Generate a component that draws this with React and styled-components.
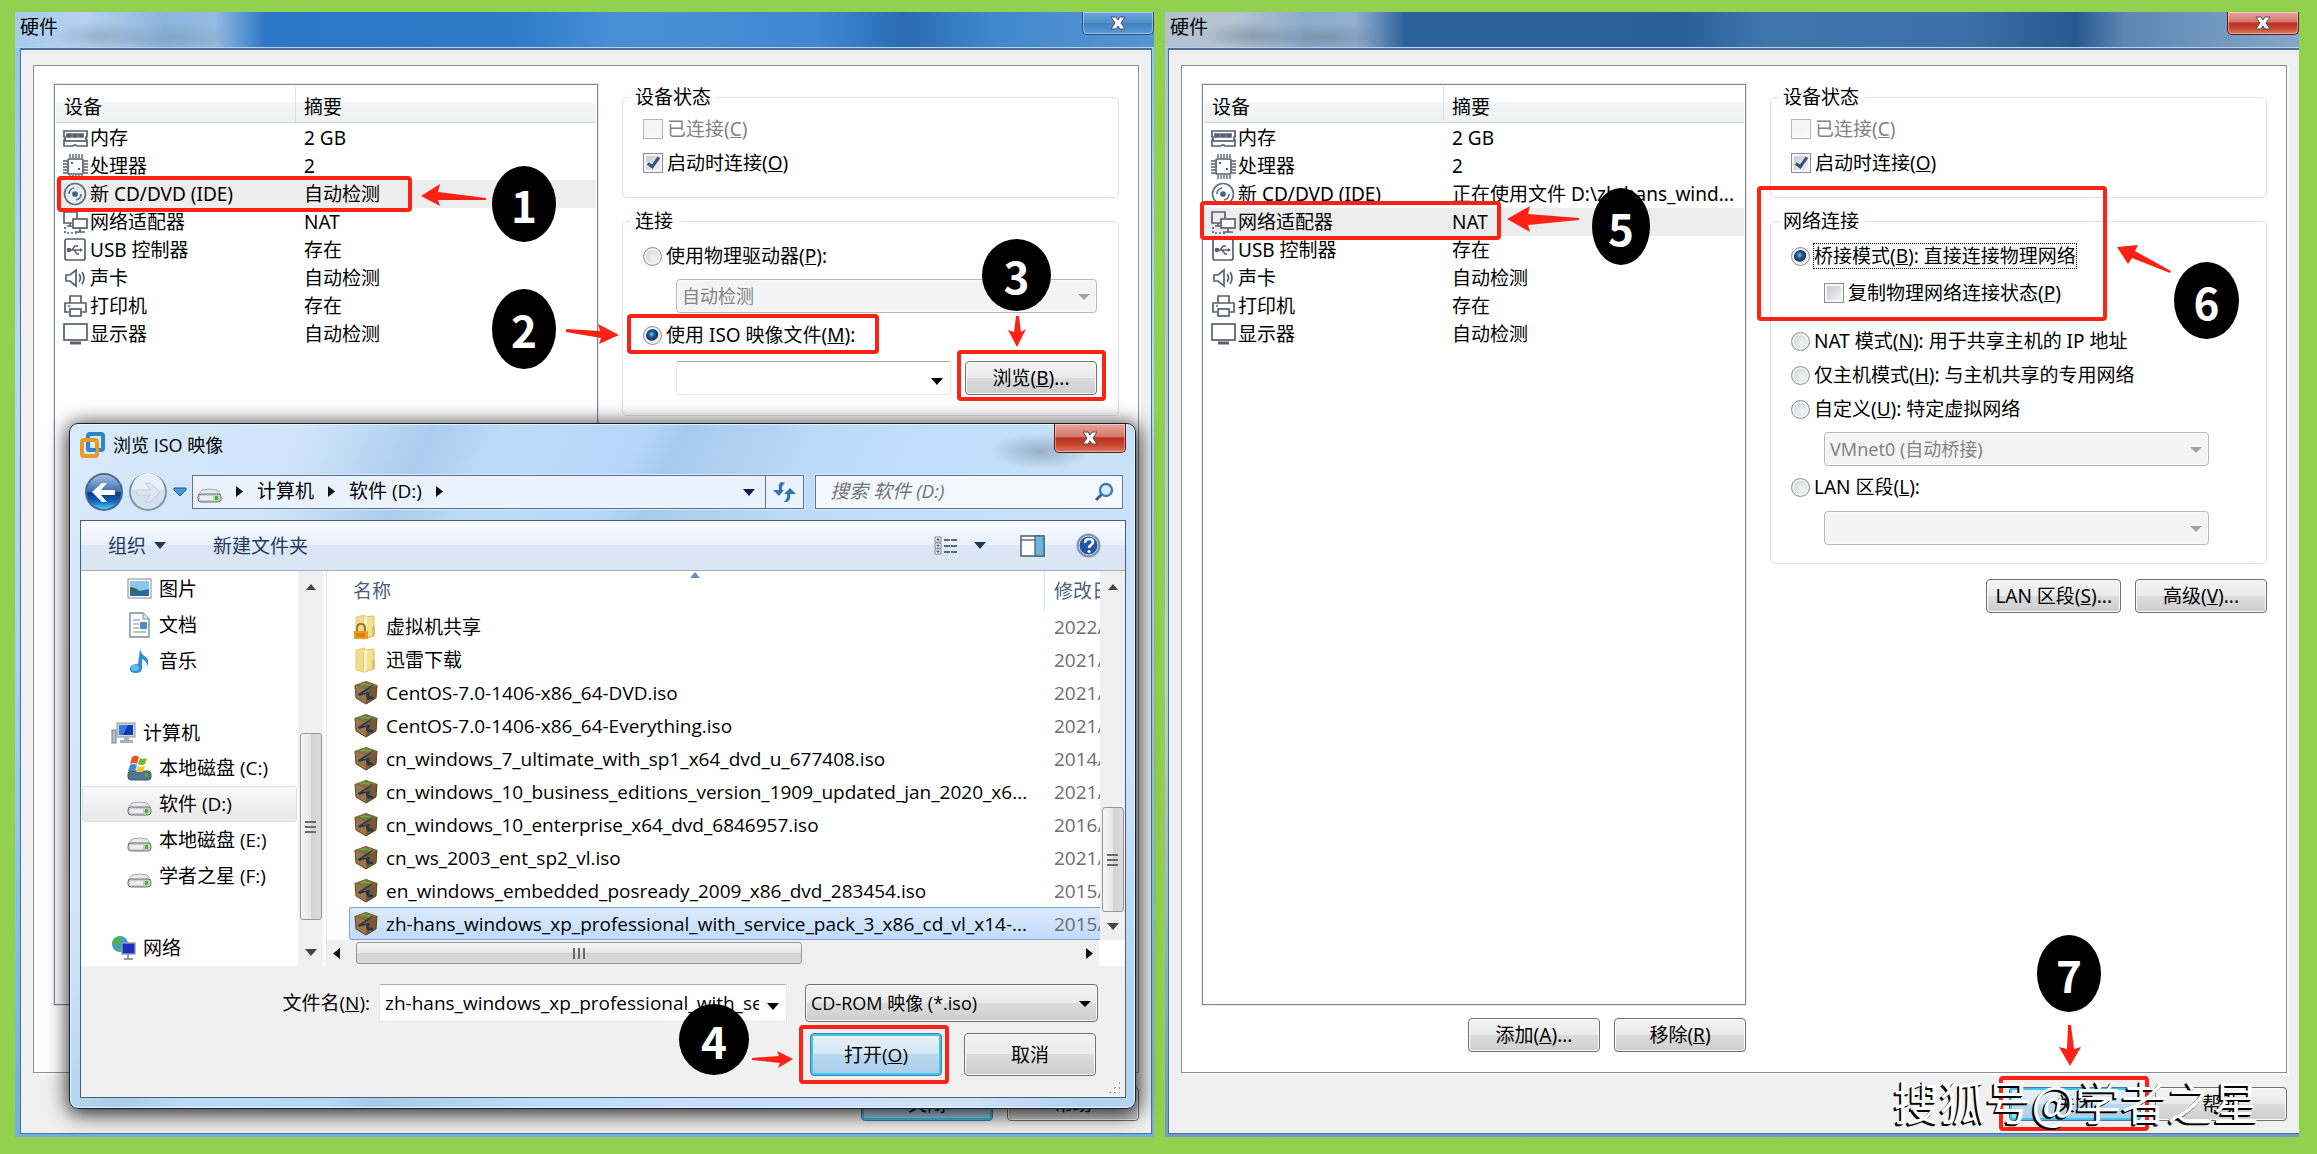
import styled, { createGlobalStyle, css } from "styled-components";

const GlobalStyle = createGlobalStyle`
    *, *::before, *::after {
        box-sizing: border-box;
    }
    body {
        margin: 0;
        background: #92d050;
        color: #000;
        font-family: "Noto Sans", "Noto Sans CJK SC", sans-serif;
        font-size: 19px;
        line-height: 28px;
    }
    button, input, select {
        font: inherit;
        color: inherit;
        margin: 0;
    }
`;

const Page = styled.main`
    display: grid;
    grid-template-columns: 1139fr 1134fr;
    gap: 11px;
    min-height: 100vh;
    padding: 12px 18px 17px 15px;
`;

/* ---------- hardware window ---------- */

const Frame = styled.section`
    position: relative;
    display: flex;
    flex-direction: column;
    min-width: 0;
    padding: ${(p) => (p.$active ? "0 0 3px 3px" : "0 2px 3px 5px")};
    background: ${(p) =>
      p.$active
        ? "linear-gradient(180deg, #a9c3df, #b9cde2 60%, #6f9cc9)"
        : "linear-gradient(180deg, #8fc0ee, #b7daf8 30%, #a5d0f4 60%, #6fb0e2)"};
`;

const blueGlass = `
    radial-gradient(ellipse 50px 14px at 86px 24px, #8296ab88, transparent),
    radial-gradient(ellipse 66px 14px at 160px 25px, #8296ab88, transparent),
    linear-gradient(90deg, #a9cbec 0, #b5d2ee 70px, #8bb5df 150px, #94bce3 200px, #2c78c6 250px, #2e7bc8 500px, #4690d6 600px, #3f89d0 800px, #2a6bb4 890px, #4288cc 980px, #5795d2 100%)
`;

const greyGlass = `
    radial-gradient(ellipse 50px 14px at 86px 24px, #6c7f9288, transparent),
    radial-gradient(ellipse 66px 14px at 160px 25px, #6c7f9288, transparent),
    linear-gradient(90deg, #b3c0ce 0, #b6c4d2 70px, #8cabcb 140px, #93b0d0 190px, #2c629b 240px, #2a6099 520px, #3f76ac 600px, #3b71a8 800px, #28588f 910px, #5c87b4 960px, #86a7cb 100%)
`;

const TitleBar = styled.header`
    display: flex;
    justify-content: space-between;
    height: 36px;
    margin: ${(p) => (p.$active ? "0 0 0 -3px" : "0 -2px 0 -5px")};
    padding-left: 5px;
    background: ${(p) => (p.$active ? greyGlass : blueGlass)};
    border-bottom: 1px solid #b6d3ee;
`;

const WindowTitle = styled.h1`
    margin: 0;
    font-size: 19px;
    font-weight: 400;
    line-height: 30px;
`;

const CloseButton = styled.button`
    display: flex;
    align-items: center;
    justify-content: center;
    width: 72px;
    height: ${(p) => p.$height}px;
    padding: 0;
    border: 1px solid ${(p) => (p.$red ? "#5d1a17" : "#24507f")};
    border-top: none;
    border-radius: 0 0 5px 5px;
    box-shadow: inset 0 0 0 1px #ffffff66;
    background: ${(p) =>
      p.$red
        ? "linear-gradient(180deg, #e6a79d 0, #d4766a 45%, #b9311f 50%, #c9462f 75%, #dd7a60)"
        : "linear-gradient(180deg, #6da3d8, #4f8dcb 50%, #3f80c1 50%, #5d99d4)"};
`;

const Client = styled.div`
    flex: 1;
    display: flex;
    flex-direction: column;
    padding: 15px 12px 12px;
    background: #f0f0f0;
    border: 1px solid #4d7396;
    border-top-width: 2px;
    ${(p) => p.$active && "border-right: none;"}
`;

const Panel = styled.div`
    flex: 1;
    display: grid;
    grid-template-columns: 544fr 497fr;
    gap: 24px;
    padding: 18px 19px 20px 20px;
    background: #fff;
    border: 1px solid #8a8f94;
    box-shadow: 1px 1px 0 1px #fbfbfb;
`;

const Column = styled.div`
    display: flex;
    flex-direction: column;
    min-width: 0;
`;

const ListBox = styled.div`
    flex: 1;
    padding: 1px;
    border: 1px solid #828790;
    box-shadow: 0 0 0 1px #e4e6e8;
`;

const DeviceTable = styled.table`
    width: 100%;
    table-layout: fixed;
    border-spacing: 0;

    th {
        height: 37px;
        padding: 6px 8px 0;
        font-weight: 400;
        text-align: left;
        line-height: 28px;
        border-bottom: 1px solid #d0d2d5;
        background: linear-gradient(180deg, #fff 45%, #f4f5f6 45%, #f0f1f3);
    }
    th:first-child {
        width: 240px;
        border-right: 1px solid #dfe1e4;
    }
    tbody::before {
        content: "";
        display: block;
        height: 1px;
    }
`;

const DeviceRow = styled.tr`
    height: 28px;

    td {
        padding: 0 0 0 8px;
        white-space: nowrap;
        background: ${(p) => (p.$selected ? "#ededed" : "transparent")};
    }
    td:first-child {
        padding-left: 7px;
    }
`;

const DeviceName = styled.span`
    display: flex;
    align-items: center;
    gap: 2px;
    height: 28px;
`;

const ButtonRow = styled.div`
    display: flex;
    justify-content: flex-end;
    gap: 14px;
    min-height: 34px;
    margin-top: ${(p) => p.$top}px;
`;

const raised = css`
    border: 1px solid #707070;
    border-radius: 4px;
    background: linear-gradient(180deg, #f3f3f3, #ebebeb 49%, #dcdcdc 50%, #cecece);
    box-shadow: inset 0 0 0 1px #fafafa;
`;

const Button = styled.button`
    ${raised}
    min-width: 132px;
    height: ${(p) => p.$height || 34}px;
    padding: 0 8px;
    white-space: nowrap;
    ${(p) =>
      p.$primary &&
      css`
        border-color: #3c7fb1;
        background: linear-gradient(180deg, #e8f2f9, #d6e8f5 49%, #b9d9ef 50%, #a9cfe9);
        box-shadow: inset 0 0 0 2px #3fc6ee;
      `}
`;

const Group = styled.fieldset`
    min-width: 0;
    margin: 0 0 10px;
    padding: 2px 21px 0 20px;
    border: 1px solid #d9e2e8;
    border-radius: 5px;
    min-height: ${(p) => p.$height}px;

    legend {
        margin-left: -13px;
        padding: 0 5px;
        line-height: 26px;
    }
`;

const Option = styled.label`
    display: flex;
    align-items: center;
    gap: 4px;
    width: max-content;
    height: ${(p) => p.$height || 34}px;
    margin-left: ${(p) => p.$indent || 0}px;
    color: ${(p) => (p.$disabled ? "#838383" : "#000")};
`;

const FocusText = styled.span`
    outline: ${(p) => (p.$focused ? "1px dotted #000" : "none")};
    line-height: 24px;
    white-space: nowrap;
`;

const Check = styled.input.attrs({ type: "checkbox" })`
    appearance: none;
    position: relative;
    width: 20px;
    height: 20px;
    border: 1px solid ${(p) => (p.disabled ? "#b5b5b5" : "#8e8f8f")};
    box-shadow: inset 0 0 0 2px #f6f6f6;
    background: linear-gradient(135deg, ${(p) => (p.disabled ? "#f2f2f2, #fafafa" : "#c3c9d0, #f4f5f6")});

    &:checked::after {
        content: "";
        position: absolute;
        left: 6px;
        top: 1px;
        width: 7px;
        height: 13px;
        border: solid #31517f;
        border-width: 0 3px 3px 0;
        transform: rotate(35deg);
    }
`;

const Radio = styled.input.attrs({ type: "radio" })`
    appearance: none;
    width: 19px;
    height: 19px;
    border: 1px solid #8b8d8f;
    border-radius: 50%;
    box-shadow: inset 0 0 0 2px #f2f2f2;
    background: radial-gradient(circle at 60% 60%, #f4f4f4, #c5c8cb);

    &:checked {
        background: radial-gradient(circle at 45% 42%, #7fc0ea 0, #1f5c94 3px, #12355f 6px, #e3e6e9 7px);
    }
`;

const SelectWrap = styled.span`
    position: relative;
    display: block;
    min-width: 0;

    &::after {
        content: "";
        position: absolute;
        right: 7px;
        top: 50%;
        width: 12px;
        height: 6px;
        margin-top: -2px;
        clip-path: polygon(0 0, 100% 0, 50% 100%);
        background: ${(p) => (p.$disabled ? "#a3a3a3" : "#000")};
        pointer-events: none;
    }
`;

const Select = styled.select`
    appearance: none;
    display: block;
    width: 100%;
    height: ${(p) => p.$height || 34}px;
    padding: 0 26px 0 5px;
    ${raised}
    font-size: 18px;

    &:disabled {
        color: #838383;
        opacity: 1;
        border-color: #b5b8ba;
        background: #f4f4f4;
    }
`;

const Indented = styled.div`
    margin: ${(p) => p.$top || 0}px ${(p) => p.$right || 0}px 0 33px;
`;

const BrowseRow = styled.div`
    display: grid;
    grid-template-columns: 1fr 132px;
    gap: 14px;
    align-items: center;
    margin: 4px 0 0 33px;
`;

const Combo = styled.span`
    display: flex;
    min-width: 0;
    height: ${(p) => p.$height}px;
    border: 1px solid #e2e8ec;
    border-top-color: #abadb3;
    border-radius: 2px;
    background: #fff;

    input {
        flex: 1;
        min-width: 0;
        padding: 0 0 0 5px;
        border: none;
        background: none;
        outline: none;
    }
    button {
        width: 27px;
        padding: 0;
        border: none;
        background: none;
    }
`;

/* ---------- browse dialog ---------- */

const Dialog = styled.section`
    position: absolute;
    left: 54px;
    right: 18px;
    top: 411px;
    bottom: 28px;
    display: flex;
    flex-direction: column;
    padding: 0 9px 10px 10px;
    border: 1px solid #15202c;
    border-radius: 9px;
    box-shadow: inset 0 0 0 1px #e9f4ff, 1px 3px 20px 2px #000000d9;
    background:
        radial-gradient(ellipse 50px 18px at 970px 27px, #7f99b3aa, transparent),
        linear-gradient(115deg, #d9eafb 0, #cfe4fa 220px, #a9cdec 330px, #bcdcfa 400px, #b5d8f8 520px, #a6cbea 560px, #bcdcfa 700px, #c6e0fa 900px, #cde3f9 1100px, #b3d3f2 1200px);
    font-family: "Open Sans", "Noto Sans CJK SC", sans-serif;
`;

const DialogTitle = styled.header`
    display: flex;
    align-items: center;
    gap: 8px;
    height: 42px;

    h2 {
        margin: 0;
        font-size: 18px;
        font-weight: 400;
    }
    > button {
        align-self: flex-start;
        margin-left: auto;
    }
`;

const AddressRow = styled.div`
    display: grid;
    grid-template-columns: 40px 40px 16px 609fr 313fr;
    align-items: center;
    column-gap: 4px;
    height: 40px;
    margin: 6px 3px 8px 4px;
`;

const BareButton = styled.button`
    display: flex;
    align-items: center;
    justify-content: center;
    gap: ${(p) => p.$gap || 0}px;
    padding: 0;
    border: none;
    background: none;
    white-space: nowrap;
`;

const Address = styled.nav`
    display: flex;
    align-items: center;
    gap: 14px;
    min-width: 0;
    height: 34px;
    padding: 0 0 2px 4px;
    border: 1px solid #5d7489;
    background: #eaf3fd;
    box-shadow: 0 0 0 1px #d5e8fa;

    > button {
        height: 32px;
        margin-bottom: -2px;
    }
    > button:nth-last-child(2) {
        width: 24px;
        margin-left: auto;
    }
    > button:last-child {
        width: 38px;
        margin-left: -10px;
        border-left: 1px solid #5d7489;
    }
`;

const Search = styled.label`
    display: flex;
    align-items: center;
    min-width: 0;
    height: 34px;
    margin-left: 7px;
    padding: 0 8px 0 14px;
    border: 1px solid #5d7489;
    background: #f3f8fe;
    box-shadow: 0 0 0 1px #d5e8fa;

    input {
        flex: 1;
        min-width: 0;
        padding: 0 0 2px;
        border: none;
        outline: none;
        background: none;
        font-style: italic;
    }
    input::placeholder {
        color: #757575;
    }
`;

const DialogBody = styled.div`
    flex: 1;
    display: flex;
    flex-direction: column;
    min-height: 0;
    border: 1px solid #4a5f75;
    background: #f0f0f0;
`;

const Toolbar = styled.div`
    display: flex;
    align-items: center;
    height: 50px;
    padding: 0 24px 0 27px;
    color: #1e395b;
    border-bottom: 1px solid #a0afc3;
    background: linear-gradient(180deg, #fafcff, #e8f0fb 48%, #dce6f4 49%, #dbe6f5);

    > button:nth-child(2) {
        margin-left: 47px;
    }
    > button:nth-child(3) {
        margin-left: auto;
    }
    > button:nth-child(4) {
        margin: 0 31px 0 34px;
    }
`;

const Panes = styled.div`
    flex: 1;
    display: flex;
    min-height: 0;
    background: #fff;
`;

const NavTree = styled.ul`
    flex: 0 0 217px;
    display: grid;
    grid-template-rows: repeat(11, 1fr);
    margin: 0;
    padding: 0 1px;
    list-style: none;
`;

const NavItem = styled.li`
    display: flex;
    align-items: center;
    gap: 7px;
    padding-left: ${(p) => (p.$root ? 28 : 44)}px;
    border: 1px solid transparent;
    border-radius: 3px;
    white-space: nowrap;
    ${(p) =>
      p.$selected &&
      css`
        border-color: #dcdcdc;
        background: linear-gradient(180deg, #fafafa, #e8e8e8);
      `}
    svg {
        flex: none;
    }
`;

const ScrollTrack = styled.div`
    display: flex;
    flex-direction: ${(p) => (p.$horizontal ? "row" : "column")};
    align-items: center;
    justify-content: space-between;
    flex: 0 0 25px;
    padding: ${(p) => (p.$horizontal ? "0 6px" : "13px 0 10px")};
    background: #f0f0f0;
`;

const thumbGradient = (deg) => `linear-gradient(${deg}deg, #f6f6f6, #e6e6e6 49%, #d2d2d2 50%, #dcdcdc)`;

const Thumb = styled.span`
    display: flex;
    flex-direction: ${(p) => (p.$horizontal ? "row" : "column")};
    align-items: center;
    justify-content: center;
    gap: 3px;
    border: 1px solid #979797;
    border-radius: 3px;
    ${(p) =>
      p.$horizontal
        ? css`
            width: 446px;
            height: 22px;
            margin: 0 auto 0 16px;
            background: ${thumbGradient(180)};
          `
        : css`
            width: 22px;
            height: ${p.$length}px;
            margin: auto 0 ${p.$below}px;
            background: ${thumbGradient(90)};
          `}

    i {
        width: ${(p) => (p.$horizontal ? 2 : 11)}px;
        height: ${(p) => (p.$horizontal ? 11 : 2)}px;
        background: #6b6b6b;
    }
`;

const FilePane = styled.div`
    flex: 1;
    display: flex;
    flex-direction: column;
    min-width: 0;
    margin-left: 3px;
    border-left: 1px solid #d9e8f5;
`;

const FileArea = styled.div`
    flex: 1;
    display: flex;
    min-height: 0;
`;

const FileTable = styled.table`
    flex: 1;
    display: flex;
    flex-direction: column;
    min-width: 0;
    padding-left: 22px;

    tr {
        display: grid;
        grid-template-columns: 1fr 56px;
    }
    th, td {
        display: flex;
        align-items: center;
        min-width: 0;
        padding: 0;
        overflow: hidden;
        white-space: nowrap;
    }
    th {
        position: relative;
        height: 40px;
        padding-left: 4px;
        color: #4c607a;
        font-weight: 400;
    }
    th svg {
        position: absolute;
        top: 1px;
        left: 49%;
    }
    th:last-child {
        padding-left: 9px;
        border-left: 1px solid #dbe8f3;
    }
    tbody {
        flex: 1;
        display: grid;
        grid-auto-rows: 1fr;
    }
    td:first-child {
        gap: 8px;
        padding-left: 4px;
    }
    td:last-child {
        padding-left: 10px;
        color: #6d6d6d;
    }
    td svg {
        flex: none;
    }
`;

const FileRow = styled.tr`
    border: 1px solid transparent;
    border-right: none;
    border-radius: 3px 0 0 3px;
    ${(p) =>
      p.$selected &&
      css`
        border-color: #7da2ce;
        background: linear-gradient(180deg, #dcebfc, #c1dbfc);
      `}
`;

const Corner = styled.span`
    flex: none;
    width: 26px;
    background: #fff;
`;

const HScrollRow = styled.div`
    display: flex;
    height: 26px;

    > div {
        flex: 1;
    }
`;

const DialogFooter = styled.form`
    height: 131px;
    padding: 18px 27px 0 0;
`;

const FileNameRow = styled.div`
    display: grid;
    grid-template-columns: 298px 1fr 18px 293px;
    align-items: center;

    label {
        padding-right: 9px;
        text-align: right;
    }
    > :last-child {
        grid-column: 4;
    }
`;

const DialogButtons = styled.div`
    display: flex;
    justify-content: flex-end;
    gap: 22px;
    margin: 11px 2px 0 0;
`;

/* ---------- step marks ---------- */

const Marks = styled.div`
    position: absolute;
    inset: 0;
    pointer-events: none;
`;

const RedBox = styled.span`
    position: absolute;
    left: ${(p) => p.$x}px;
    top: ${(p) => p.$y}px;
    width: ${(p) => p.$w}px;
    height: ${(p) => p.$h}px;
    border: 4px solid #ff2113;
    border-radius: 4px;
`;

const Step = styled.span`
    position: absolute;
    left: ${(p) => p.$x}px;
    top: ${(p) => p.$y}px;
    display: flex;
    align-items: center;
    justify-content: center;
    width: ${(p) => p.$w}px;
    height: ${(p) => p.$h}px;
    border-radius: 50%;
    background: #000;
    color: #fff;
    font-family: "Noto Sans CJK SC", sans-serif;
    font-size: 44px;
    font-weight: 700;
`;

const Arrow = styled.svg`
    position: absolute;
    left: ${(p) => p.$x}px;
    top: ${(p) => p.$y}px;
    fill: #ff2113;
`;

const Watermark = styled.p`
    position: absolute;
    right: 40px;
    bottom: 9px;
    margin: 0;
    color: #fff;
    font-family: "Noto Sans CJK SC", sans-serif;
    font-size: 46px;
    line-height: 56px;
    white-space: nowrap;
    text-shadow: -1px 1px 0 #000, -2px 2px 0 #000;
`;

const leftMarks = {
  boxes: [
    [42, 164, 355, 36],
    [612, 302, 252, 40],
    [942, 338, 149, 51],
    [784, 1013, 150, 59],
  ],
  steps: [
    [1, 477, 154, 64, 76],
    [2, 477, 277, 64, 80],
    [3, 967, 227, 69, 72],
    [4, 664, 992, 70, 71],
  ],
  arrows: [
    [406, 172, 65, 22, "0,12 19,0 17,8 65,14 65,16 17,16 19,22"],
    [551, 312, 53, 20, "0,5 34,7 32,0 53,11 33,20 35,14 0,8"],
    [993, 304, 18, 31, "8,0 11,0 13,16 18,13 9,31 0,14 6,16"],
    [737, 1039, 41, 17, "0,7 27,5 25,0 41,8 26,17 28,12 0,9"],
  ],
};

const rightMarks = {
  boxes: [
    [35, 189, 301, 39],
    [592, 174, 350, 135],
    [834, 1064, 150, 55],
  ],
  steps: [
    [5, 427, 176, 58, 77],
    [6, 1009, 250, 65, 77],
    [7, 872, 923, 64, 77],
  ],
  arrows: [
    [342, 194, 72, 26, "0,13 23,0 21,8 72,12 72,14 21,19 23,26"],
    [952, 233, 54, 28, "0,2 21,0 18,6 54,26 53,28 15,13 11,19"],
    [894, 1013, 22, 41, "9,0 12,0 15,24 22,22 11,41 0,22 8,24"],
  ],
};

function StepMarks({ marks }) {
  return (
    <Marks>
      {marks.boxes.map(([x, y, w, h]) => (
        <RedBox key={`${x}-${y}`} $x={x} $y={y} $w={w} $h={h} />
      ))}
      {marks.arrows.map(([x, y, w, h, points]) => (
        <Arrow key={points} $x={x} $y={y} width={w} height={h}>
          <polygon points={points} />
        </Arrow>
      ))}
      {marks.steps.map(([n, x, y, w, h]) => (
        <Step key={n} $x={x} $y={y} $w={w} $h={h}>{n}</Step>
      ))}
    </Marks>
  );
}

/* ---------- icons ---------- */

const devicePaths = {
  memory: (
    <>
      <path d="M1 5h23v6h-1v3h1v6H14l-1-1h-2l-1 1H1v-6h1v-3H1z" />
      <path d="M4 8h4v3H4zM10 8h4v3h-4zM16 8h4v3h-4z" fill="#56616d" />
      <path d="M2 15h21" />
    </>
  ),
  cpu: (
    <>
      <rect x="5" y="5" width="15" height="15" rx="1" />
      <path d="M7 0v4M10 0v4M13 0v4M16 0v4M19 0v4M7 21v4M10 21v4M13 21v4M16 21v4M19 21v4M0 7h4M0 10h4M0 13h4M0 16h4M0 19h4M21 7h4M21 10h4M21 13h4M21 16h4M21 19h4" strokeWidth="1.4" />
      <path d="M8 8h2v2H8zM15 14h2v2h-2z" fill="#56616d" stroke="none" />
    </>
  ),
  disc: (
    <>
      <circle cx="12" cy="12" r="10.500" stroke="#5a7388" />
      <circle cx="12" cy="12" r="2" fill="#3f6484" stroke="#3f6484" />
      <path d="M6 12a6 6 0 0 1 5-6M18 12a6 6 0 0 1-5 6" stroke="#5a7388" />
    </>
  ),
  network: (
    <>
      <path d="M9 13H1V2h13v6M4 16h5M7 13v3" />
      <rect x="10" y="9" width="14" height="9" fill="#fff" />
      <path d="M17 18v4M12 22h10" />
      <path d="M2 17v6h12" strokeDasharray="2 2" />
    </>
  ),
  usb: (
    <>
      <rect x="2" y="1" width="20" height="21" rx="2" />
      <path d="M5 12h13M9 12l3-4h3M11 12l3 4h2" strokeWidth="1.400" />
      <circle cx="6" cy="12" r="1.500" fill="#56616d" />
      <path d="M17 10l3 2-3 2z" fill="#56616d" stroke="none" />
    </>
  ),
  sound: (
    <>
      <path d="M3 9h4l6-5v16l-6-5H3z" />
      <path d="M16 8q3 4 0 8M19 6q4 6 0 12" />
    </>
  ),
  printer: (
    <>
      <path d="M7 9V2h11v7M6 18H2V9h21v9h-4" />
      <rect x="7" y="15" width="11" height="7" />
      <path d="M5 12h2" />
    </>
  ),
  display: (
    <>
      <rect x="1" y="2" width="23" height="16" />
      <path d="M7 21h11" strokeWidth="3" />
    </>
  ),
};

const DeviceIcon = ({ name }) => (
  <svg width="25" height="25" viewBox="0 0 25 25" fill="none" stroke="#56616d" strokeWidth="1.700" aria-hidden="true">
    {devicePaths[name]}
  </svg>
);

const CloseGlyph = () => (
  <svg width="16" height="14" viewBox="0 0 16 14" aria-hidden="true">
    <path d="M1 1h5l2 3 2-3h5l-4 6 4 6h-5l-2-3-2 3H1l4-6z" fill="#fff" stroke="#4c4f58" />
  </svg>
);

const DownTriangle = ({ color = "#000" }) => (
  <svg width="12" height="7" viewBox="0 0 12 7" aria-hidden="true">
    <path d="M0 0h12L6 7z" fill={color} />
  </svg>
);

const UpTriangle = ({ color = "#444" }) => (
  <svg width="10" height="6" viewBox="0 0 10 6" aria-hidden="true">
    <path d="M0 6h10L5 0z" fill={color} />
  </svg>
);

const SideTriangle = ({ flip }) => (
  <svg width="7" height="11" viewBox="0 0 7 11" aria-hidden="true">
    <path d={flip ? "M7 0v11L0 5.500z" : "M0 0v11l7-5.500z"} fill="#111" />
  </svg>
);

const VmwareLogo = () => (
  <svg width="25" height="26" viewBox="0 0 25 26" fill="none" strokeWidth="4" aria-hidden="true">
    <rect x="8" y="2" width="15" height="16" rx="2" stroke="#2f86c9" />
    <rect x="2" y="8" width="15" height="16" rx="2" stroke="#e89a24" />
    <path d="M8 11v7h8" stroke="#2f86c9" strokeWidth="3" />
  </svg>
);

const BackIcon = () => (
  <svg width="40" height="40" viewBox="0 0 40 40" aria-hidden="true">
    <defs>
      <linearGradient id="back" x1="0" y1="0" x2="0" y2="1">
        <stop offset="0" stopColor="#a9c7e8" />
        <stop offset="0.480" stopColor="#3d6fb4" />
        <stop offset="0.520" stopColor="#0a3a86" />
        <stop offset="0.750" stopColor="#1161b8" />
        <stop offset="1" stopColor="#4fdcff" />
      </linearGradient>
    </defs>
    <circle cx="20" cy="20" r="18" fill="url(#back)" stroke="#4b6a90" strokeWidth="2" />
    <path d="M8 20l10-9h5l-6 7h14v5H17l6 7h-5z" fill="#fff" />
  </svg>
);

const ForwardIcon = () => (
  <svg width="40" height="40" viewBox="0 0 40 40" aria-hidden="true">
    <circle cx="20" cy="20" r="18" fill="#d3e1ef" stroke="#8195a9" strokeWidth="2" />
    <path d="M4 17a16 16 0 0 1 32 0q-16 6-32 0z" fill="#e9f0f8" />
    <path d="M32 20l-10-9h-5l6 7H9v5h14l-6 7h5z" fill="#dfe8f1" stroke="#bccddd" />
  </svg>
);

const RecentIcon = () => (
  <svg width="14" height="10" viewBox="0 0 14 10" aria-hidden="true">
    <path d="M1 1h12v2L7 9 1 3z" fill="#4d9ad8" stroke="#1c4f86" />
  </svg>
);

const RefreshIcon = () => (
  <svg width="23" height="20" viewBox="0 0 23 20" aria-hidden="true">
    <path d="M8 0Q5 2 6 8H0l6 6 5-6H9q-1-4 3-7zM14 20q4-2 3-8h6l-6-6-6 6h3q1 4-3 8z" fill="#3271b3" />
  </svg>
);

const SearchIcon = () => (
  <svg width="20" height="20" viewBox="0 0 20 20" fill="none" aria-hidden="true">
    <path d="M2 18l6-6" stroke="#3b5c8a" strokeWidth="3" />
    <circle cx="12" cy="8" r="6" fill="#d9ecfb" stroke="#3d78b5" strokeWidth="2.400" />
  </svg>
);

const ViewIcon = () => (
  <svg width="24" height="20" viewBox="0 0 24 20" fill="none" stroke="#7b8592" aria-hidden="true">
    <path d="M1 1h6v5H1zM1 7h6v5H1zM1 13h6v5H1z" fill="#fff" />
    <path d="M3 3h2v1H3zM3 9h2v1H3zM3 15h2v1H3z" stroke="#3c4d63" />
    <path d="M10 4h6M17 4h6M10 10h6M17 10h6M10 16h6M17 16h6" stroke="#566780" strokeWidth="2" />
  </svg>
);

const PreviewIcon = () => (
  <svg width="25" height="22" viewBox="0 0 25 22" aria-hidden="true">
    <rect x="1" y="1" width="23" height="20" fill="#fff" stroke="#4f6781" strokeWidth="1.600" />
    <path d="M1 5h14" stroke="#4f6781" strokeWidth="1.400" />
    <rect x="15" y="1" width="9" height="20" fill="#6fb2e0" stroke="#4f6781" strokeWidth="1.400" />
  </svg>
);

const HelpIcon = () => (
  <svg width="25" height="25" viewBox="0 0 25 25" fill="none" aria-hidden="true">
    <circle cx="12.500" cy="12.500" r="11" fill="#1e55a8" stroke="#8795a6" strokeWidth="2" />
    <circle cx="12.500" cy="12.500" r="9.500" stroke="#dfe8f3" />
    <path d="M9 10q0-4 4-4t4 3q0 2-2 3t-2 3" stroke="#fff" strokeWidth="2.600" />
    <circle cx="13" cy="18.500" r="1.600" fill="#fff" />
  </svg>
);

const DriveIcon = () => (
  <svg width="25" height="24" viewBox="0 0 25 24" aria-hidden="true">
    <path d="M1 16l4-5q8-2 15 0l4 5z" fill="#e8e9ea" stroke="#a6a9ac" />
    <rect x="1" y="15" width="23" height="8" rx="3" fill="#c9cccf" stroke="#6e7276" />
    <path d="M3 17h13v4H3z" fill="#eceeef" />
    <path d="M18 17h3v4h-3z" fill="#4bb324" />
  </svg>
);

const WindowsDriveIcon = () => (
  <svg width="25" height="26" viewBox="0 0 25 26" aria-hidden="true">
    <rect x="1" y="16" width="23" height="9" rx="3" fill="#4b7797" stroke="#4e565d" />
    <path d="M18 18h3v4h-3z" fill="#4bb324" />
    <path d="M5 2q4-3 7 0l-2 7q-3-2-7 0z" fill="#e8532a" />
    <path d="M13 3q3 2 7 0l-2 6q-4 2-7 0z" fill="#74b62c" />
    <path d="M3 10q3-2 7 0l-2 6H1z" fill="#3d8ad6" />
    <path d="M11 11q3 2 7 0l-2 6H9z" fill="#f5c324" />
  </svg>
);

const PictureIcon = () => (
  <svg width="25" height="22" viewBox="0 0 25 22" aria-hidden="true">
    <rect x="1" y="1" width="23" height="19" fill="#fff" stroke="#7d8a96" />
    <rect x="3" y="3" width="19" height="15" fill="#8cc8ee" />
    <path d="M3 10q6 0 10 3l9-2v7H3z" fill="#2b6a93" />
    <path d="M3 9q4 0 8 3l-8 1z" fill="#2f6b3d" />
  </svg>
);

const DocumentIcon = () => (
  <svg width="25" height="26" viewBox="0 0 25 26" aria-hidden="true">
    <path d="M3 1h13l6 6v18H3z" fill="#fff" stroke="#7d8a96" strokeWidth="1.400" />
    <path d="M16 1v6h6" fill="#dde4ea" stroke="#7d8a96" />
    <path d="M6 8h7M6 12h6M6 16h6M6 20h13" stroke="#a4b2bf" strokeWidth="1.600" />
    <rect x="13" y="10" width="7" height="7" fill="#4d8cc4" />
  </svg>
);

const MusicIcon = () => (
  <svg width="25" height="26" viewBox="0 0 25 26" aria-hidden="true">
    <path d="M13 1q1 5 6 8 4 4 1 9 0-5-5-7v9q0 5-6 5-7 0-6-5 1-4 8-4z" fill="#2f8fd6" />
    <ellipse cx="8" cy="20" rx="4" ry="3" fill="#63bdf0" />
  </svg>
);

const ComputerIcon = () => (
  <svg width="25" height="22" viewBox="0 0 25 22" aria-hidden="true">
    <rect x="1" y="8" width="4" height="13" fill="#b8bdc2" stroke="#7d848b" />
    <rect x="6" y="1" width="18" height="14" fill="#c9d4dd" stroke="#8995a0" />
    <rect x="8" y="3" width="14" height="10" fill="#1238b0" />
    <path d="M8 3h9l-5 10H8z" fill="#3c79e0" />
    <path d="M13 15h5v3h4v3H9v-3h4z" fill="#a9b0b6" />
  </svg>
);

const NetworkIcon = () => (
  <svg width="25" height="26" viewBox="0 0 25 26" aria-hidden="true">
    <circle cx="9" cy="9" r="8" fill="#3f9bd8" />
    <path d="M3 4q5-4 9-1l-3 5-4 2-4-1zM4 12l5 1v4q-4-1-5-5z" fill="#58b04a" />
    <rect x="11" y="8" width="13" height="11" fill="#1b2fc0" stroke="#8e9dab" strokeWidth="1.400" />
    <path d="M17 19v4M13 24h9" stroke="#8e9dab" strokeWidth="2" />
  </svg>
);

const FolderIcon = ({ locked }) => (
  <svg width="24" height="26" viewBox="0 0 24 26" aria-hidden="true">
    <path d="M2 3l9-2 1 23-3 1-7-2z" fill="#f1dc8c" stroke="#e3cc7c" />
    <path d="M10 3l10-1v20l-10 3z" fill="#f3df92" stroke="#d9bd62" />
    <path d="M10 3l3-1v22l-3 1z" fill="#fbf2c4" />
    <path d="M18 13l3-1v9l-3 1z" fill="#e0c266" />
    {locked && (
      <>
        <path d="M3 17v-3q0-4 4-4t4 4v3" fill="none" stroke="#9a7a30" strokeWidth="2" />
        <rect x="0" y="17" width="14" height="8" fill="#ef9c26" />
        <path d="M2 20h9M2 22h9" stroke="#b56d11" />
      </>
    )}
  </svg>
);

const IsoIcon = () => (
  <svg width="24" height="24" viewBox="0 0 24 24" aria-hidden="true">
    <path d="M12 0l11 4-1 13-10 6L2 17 1 4z" fill="#9b7646" />
    <path d="M12 8l11-4-1 13-10 6z" fill="#7b5930" />
    <path d="M12 0l11 4-11 5L1 4z" fill="#866a45" />
    <path d="M5 3h3l1-1h3l1 1h5l-3 2-4-1-3 1z" fill="#5fae2f" />
    <path d="M20 3L4 13l1 2 7-2v2l2 4 2-1 4 1-1-3-4-1 1-4-7 1 6-4z" fill="#25364f" />
    <path d="M1 4l1 13 10 6 10-6 1-13" fill="none" stroke="#5b4327" />
  </svg>
);

const ResizeGrip = styled.span`
    display: block;
    width: 13px;
    height: 13px;
    margin: 4px -22px 0 auto;
    background: radial-gradient(circle, #9b9b9b 1px, transparent 1px) 0 0 / 5px 5px;
    clip-path: polygon(100% 0, 100% 100%, 0 100%);
`;

/* ---------- data ---------- */

const baseDevices = [
  { icon: "memory", name: "内存", summary: "2 GB" },
  { icon: "cpu", name: "处理器", summary: "2" },
  { icon: "disc", name: "新 CD/DVD (IDE)", summary: "自动检测" },
  { icon: "network", name: "网络适配器", summary: "NAT" },
  { icon: "usb", name: "USB 控制器", summary: "存在" },
  { icon: "sound", name: "声卡", summary: "自动检测" },
  { icon: "printer", name: "打印机", summary: "存在" },
  { icon: "display", name: "显示器", summary: "自动检测" },
];

const bridgedDevices = baseDevices.map((d) =>
  d.icon === "disc" ? { ...d, summary: "正在使用文件 D:\\zh-hans_wind..." } : d
);

const places = [
  { icon: PictureIcon, name: "图片" },
  { icon: DocumentIcon, name: "文档" },
  { icon: MusicIcon, name: "音乐" },
  null,
  { icon: ComputerIcon, name: "计算机", root: true },
  { icon: WindowsDriveIcon, name: "本地磁盘 (C:)" },
  { icon: DriveIcon, name: "软件 (D:)", selected: true },
  { icon: DriveIcon, name: "本地磁盘 (E:)" },
  { icon: DriveIcon, name: "学者之星 (F:)" },
  null,
  { icon: NetworkIcon, name: "网络", root: true },
];

const files = [
  { name: "虚拟机共享", date: "2022/", folder: true, locked: true },
  { name: "迅雷下载", date: "2021/", folder: true },
  { name: "CentOS-7.0-1406-x86_64-DVD.iso", date: "2021/" },
  { name: "CentOS-7.0-1406-x86_64-Everything.iso", date: "2021/" },
  { name: "cn_windows_7_ultimate_with_sp1_x64_dvd_u_677408.iso", date: "2014/" },
  { name: "cn_windows_10_business_editions_version_1909_updated_jan_2020_x6...", date: "2021/" },
  { name: "cn_windows_10_enterprise_x64_dvd_6846957.iso", date: "2016/" },
  { name: "cn_ws_2003_ent_sp2_vl.iso", date: "2021/" },
  { name: "en_windows_embedded_posready_2009_x86_dvd_283454.iso", date: "2015/" },
  { name: "zh-hans_windows_xp_professional_with_service_pack_3_x86_cd_vl_x14-...", date: "2015/", selected: true },
];

/* ---------- parts ---------- */

function HardwareWindow({ active, devices, selected, listActions, settings, children }) {
  return (
    <Frame $active={active}>
      <TitleBar $active={active}>
        <WindowTitle>硬件</WindowTitle>
        <CloseButton $red={active} $height={23} aria-label="关闭窗口">
          <CloseGlyph />
        </CloseButton>
      </TitleBar>
      <Client $active={active}>
        <Panel>
          <Column>
            <ListBox>
              <DeviceTable>
                <thead>
                  <tr>
                    <th>设备</th>
                    <th>摘要</th>
                  </tr>
                </thead>
                <tbody>
                  {devices.map((d) => (
                    <DeviceRow key={d.icon} $selected={d.icon === selected}>
                      <td>
                        <DeviceName>
                          <DeviceIcon name={d.icon} />
                          {d.name}
                        </DeviceName>
                      </td>
                      <td>{d.summary}</td>
                    </DeviceRow>
                  ))}
                </tbody>
              </DeviceTable>
            </ListBox>
            <ButtonRow $top={13}>{listActions}</ButtonRow>
          </Column>
          <Column>
            <Group $height={114}>
              <legend>设备状态</legend>
              <Option $disabled>
                <Check disabled />
                <span>已连接(<u>C</u>)</span>
              </Option>
              <Option>
                <Check defaultChecked />
                <span>启动时连接(<u>O</u>)</span>
              </Option>
            </Group>
            {settings}
          </Column>
        </Panel>
        <ButtonRow $top={14}>
          <Button $primary>关闭</Button>
          <Button>帮助</Button>
        </ButtonRow>
      </Client>
      {children}
    </Frame>
  );
}

function DriveSettings() {
  return (
    <Group $height={208}>
      <legend>连接</legend>
      <Option $height={40}>
        <Radio name="drive" />
        <span>使用物理驱动器(<u>P</u>):</span>
      </Option>
      <Indented $top={3}>
        <SelectWrap $disabled>
          <Select disabled aria-label="物理驱动器">
            <option>自动检测</option>
          </Select>
        </SelectWrap>
      </Indented>
      <Option $height={44}>
        <Radio name="drive" defaultChecked />
        <span>使用 ISO 映像文件(<u>M</u>):</span>
      </Option>
      <BrowseRow>
        <Combo $height={34}>
          <input type="text" aria-label="映像文件" />
          <button type="button" aria-label="展开">
            <DownTriangle />
          </button>
        </Combo>
        <Button>浏览(<u>B</u>)...</Button>
      </BrowseRow>
    </Group>
  );
}

function NetworkSettings() {
  return (
    <>
      <Group $height={356}>
        <legend>网络连接</legend>
        <Option $height={40}>
          <Radio name="net" defaultChecked />
          <FocusText $focused>桥接模式(<u>B</u>): 直接连接物理网络</FocusText>
        </Option>
        <Option $height={34} $indent={33}>
          <Check />
          <span>复制物理网络连接状态(<u>P</u>)</span>
        </Option>
        <Indented $top={14} />
        <Option>
          <Radio name="net" />
          <span>NAT 模式(<u>N</u>): 用于共享主机的 IP 地址</span>
        </Option>
        <Option>
          <Radio name="net" />
          <span>仅主机模式(<u>H</u>): 与主机共享的专用网络</span>
        </Option>
        <Option>
          <Radio name="net" />
          <span>自定义(<u>U</u>): 特定虚拟网络</span>
        </Option>
        <Indented $top={6} $right={36}>
          <SelectWrap $disabled>
            <Select disabled aria-label="虚拟网络">
              <option>VMnet0 (自动桥接)</option>
            </Select>
          </SelectWrap>
        </Indented>
        <Option $height={42}>
          <Radio name="net" />
          <span>LAN 区段(<u>L</u>):</span>
        </Option>
        <Indented $top={3} $right={36}>
          <SelectWrap $disabled>
            <Select disabled aria-label="LAN 区段" />
          </SelectWrap>
        </Indented>
      </Group>
      <ButtonRow $top={5}>
        <Button>LAN 区段(<u>S</u>)...</Button>
        <Button>高级(<u>V</u>)...</Button>
      </ButtonRow>
    </>
  );
}

function BrowseDialog() {
  return (
    <Dialog role="dialog" aria-label="浏览 ISO 映像">
      <DialogTitle>
        <VmwareLogo />
        <h2>浏览 ISO 映像</h2>
        <CloseButton $red $height={29} aria-label="关闭对话框">
          <CloseGlyph />
        </CloseButton>
      </DialogTitle>
      <AddressRow>
        <BareButton aria-label="后退"><BackIcon /></BareButton>
        <BareButton aria-label="前进"><ForwardIcon /></BareButton>
        <BareButton aria-label="最近位置"><RecentIcon /></BareButton>
        <Address aria-label="地址">
          <DriveIcon />
          <SideTriangle />
          <span>计算机</span>
          <SideTriangle />
          <span>软件 (D:)</span>
          <SideTriangle />
          <BareButton aria-label="历史记录"><DownTriangle color="#141d48" /></BareButton>
          <BareButton aria-label="刷新"><RefreshIcon /></BareButton>
        </Address>
        <Search>
          <input type="text" placeholder="搜索 软件 (D:)" aria-label="搜索" />
          <SearchIcon />
        </Search>
      </AddressRow>
      <DialogBody>
        <Toolbar>
          <BareButton $gap={8}>组织 <DownTriangle color="#1e395b" /></BareButton>
          <BareButton>新建文件夹</BareButton>
          <BareButton $gap={16} aria-label="更改视图"><ViewIcon /><DownTriangle color="#1e395b" /></BareButton>
          <BareButton aria-label="预览窗格"><PreviewIcon /></BareButton>
          <BareButton aria-label="帮助"><HelpIcon /></BareButton>
        </Toolbar>
        <Panes>
          <NavTree>
            {places.map((place, i) =>
              place ? (
                <NavItem key={place.name} $root={place.root} $selected={place.selected}>
                  <place.icon />
                  {place.name}
                </NavItem>
              ) : (
                <li key={i} />
              )
            )}
          </NavTree>
          <ScrollTrack>
            <UpTriangle />
            <Thumb $length={187} $below={29}><i /><i /><i /></Thumb>
            <DownTriangle color="#444" />
          </ScrollTrack>
          <FilePane>
            <FileArea>
              <FileTable>
                <thead>
                  <tr>
                    <th>名称<UpTriangle color="#6b93ba" /></th>
                    <th>修改日期</th>
                  </tr>
                </thead>
                <tbody>
                  {files.map((f) => (
                    <FileRow key={f.name} $selected={f.selected}>
                      <td>
                        {f.folder ? <FolderIcon locked={f.locked} /> : <IsoIcon />}
                        {f.name}
                      </td>
                      <td>{f.date}</td>
                    </FileRow>
                  ))}
                </tbody>
              </FileTable>
              <ScrollTrack>
                <UpTriangle />
                <Thumb $length={105} $below={11}><i /><i /><i /></Thumb>
                <DownTriangle color="#444" />
              </ScrollTrack>
            </FileArea>
            <HScrollRow>
              <ScrollTrack $horizontal>
                <SideTriangle flip />
                <Thumb $horizontal><i /><i /><i /></Thumb>
                <SideTriangle />
              </ScrollTrack>
              <Corner />
            </HScrollRow>
          </FilePane>
        </Panes>
        <DialogFooter>
          <FileNameRow>
            <label htmlFor="file-name">文件名(<u>N</u>):</label>
            <Combo $height={38}>
              <input id="file-name" type="text" defaultValue="zh-hans_windows_xp_professional_with_se" />
              <button type="button" aria-label="展开文件名">
                <DownTriangle />
              </button>
            </Combo>
            <SelectWrap>
              <Select $height={38} aria-label="文件类型">
                <option>CD-ROM 映像 (*.iso)</option>
              </Select>
            </SelectWrap>
          </FileNameRow>
          <DialogButtons>
            <Button type="button" $primary $height={43}>打开(<u>O</u>)</Button>
            <Button type="button" $height={43}>取消</Button>
          </DialogButtons>
          <ResizeGrip />
        </DialogFooter>
      </DialogBody>
    </Dialog>
  );
}

export default function App() {
  return (
    <>
      <GlobalStyle />
      <Page>
        <HardwareWindow devices={baseDevices} selected="disc" settings={<DriveSettings />}>
          <BrowseDialog />
          <StepMarks marks={leftMarks} />
        </HardwareWindow>
        <HardwareWindow
          active
          devices={bridgedDevices}
          selected="network"
          settings={<NetworkSettings />}
          listActions={
            <>
              <Button>添加(<u>A</u>)...</Button>
              <Button>移除(<u>R</u>)</Button>
            </>
          }
        >
          <StepMarks marks={rightMarks} />
          <Watermark>搜狐号@学者之星</Watermark>
        </HardwareWindow>
      </Page>
    </>
  );
}
